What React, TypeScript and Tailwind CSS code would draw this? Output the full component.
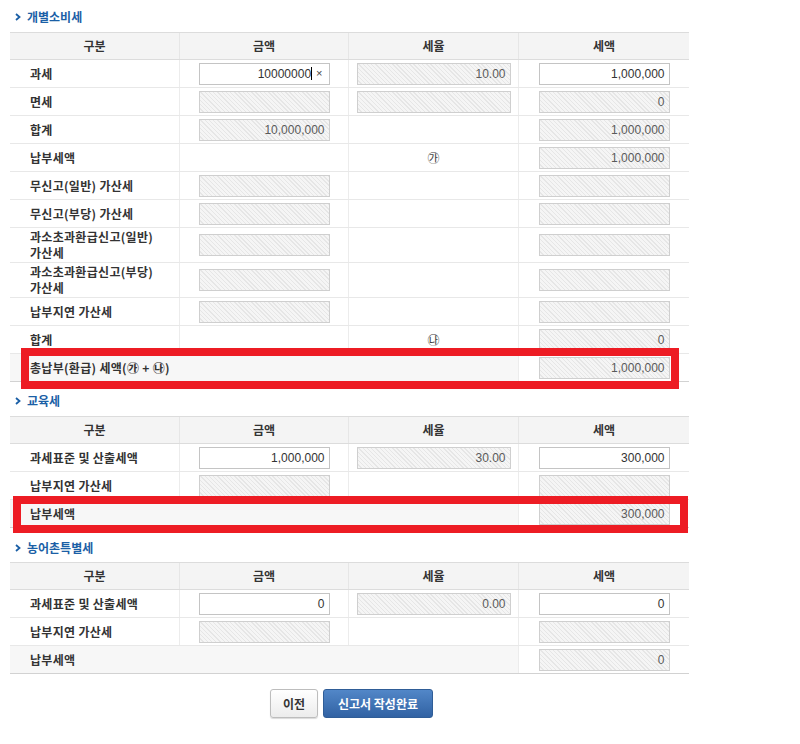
import React from 'react';

type Cell =
  | { kind: 'empty' }
  | { kind: 'mark'; text: string }
  | { kind: 'field'; value?: string; edit?: boolean; caret?: boolean; wide?: boolean };

interface Row {
  label: React.ReactNode;
  tall?: boolean;
  span?: boolean;
  cells: Cell[];
}

const hatch =
  'bg-[#f3f3f3] bg-[image:repeating-linear-gradient(45deg,#f5f5f5_0px,#f5f5f5_2px,#e6e6e6_2px,#e6e6e6_3px)]';

function Field({ value, edit, caret, wide }: { value?: string; edit?: boolean; caret?: boolean; wide?: boolean }) {
  const base =
    'mx-auto h-[22px] flex items-center justify-end pr-[4px] text-[12px] font-["Liberation_Sans",sans-serif]';
  const w = wide ? 'w-[154px]' : 'w-[131px]';
  if (edit) {
    return (
      <div className={`${base} ${w} bg-white border border-[#c4c4c4] text-[#333]`}>
        {value}
        {caret && (
          <>
            <span className="w-px h-[13px] bg-black" />
            <span className="ml-[4px] mr-[2px] text-[11px] text-[#444]">×</span>
          </>
        )}
      </div>
    );
  }
  return <div className={`${base} ${w} ${hatch} border border-[#cfcfcf] text-[#5a5a5a]`}>{value}</div>;
}

function renderCell(c: Cell) {
  if (c.kind === 'empty') return null;
  if (c.kind === 'mark') return <span className="text-[12px] text-[#444]">{c.text}</span>;
  return <Field value={c.value} edit={c.edit} caret={c.caret} wide={c.wide} />;
}

const E: Cell = { kind: 'empty' };
const G = (value?: string, wide?: boolean): Cell => ({ kind: 'field', value, wide });
const W = (value: string, caret?: boolean): Cell => ({ kind: 'field', value, edit: true, caret });

function Chevron() {
  return (
    <svg width="6" height="8" viewBox="0 0 6 8" className="mr-[6px]">
      <path d="M1 1 L4.5 4 L1 7" fill="none" stroke="#1b5fa6" strokeWidth="1.8" />
    </svg>
  );
}

function Title({ text, className }: { text: string; className: string }) {
  return (
    <div className={`flex items-center h-4 pl-[5px] text-[12px] font-bold text-[#1b5fa6] ${className}`}>
      <Chevron />
      {text}
    </div>
  );
}

function Header() {
  const cls = 'flex items-center justify-center text-[12px] font-bold text-[#333]';
  return (
    <div className="grid grid-cols-[170px_169px_170px_170px] h-[28px] bg-[#f4f4f4] border-t border-b border-[#dcdcdc]">
      <div className={`${cls} border-r border-[#e6e6e6]`}>구분</div>
      <div className={`${cls} border-r border-[#e6e6e6]`}>금액</div>
      <div className={`${cls} border-r border-[#e6e6e6]`}>세율</div>
      <div className={cls}>세액</div>
    </div>
  );
}

function TaxTable({ rows, children }: { rows: Row[]; children?: React.ReactNode }) {
  return (
    <div className="relative w-[679px]">
      <Header />
      {rows.map((r, i) => {
        const last = i === rows.length - 1;
        const rowCls = `grid grid-cols-[170px_169px_170px_170px] border-b ${
          last ? 'border-[#d2d2d2]' : 'border-[#e8e8e8]'
        } ${r.tall ? 'h-[35px]' : 'h-[28px]'}`;
        const label = 'flex items-center pl-[20px] text-[12px] font-bold text-[#333] leading-[16px] tracking-[0.3px]';
        if (r.span) {
          return (
            <div key={i} className={rowCls}>
              <div className={`${label} col-span-3 bg-[#f7f7f7] border-r border-[#ececec]`}>{r.label}</div>
              <div className="flex items-center">{renderCell(r.cells[0])}</div>
            </div>
          );
        }
        return (
          <div key={i} className={rowCls}>
            <div className={`${label} border-r border-[#ececec]`}>{r.label}</div>
            <div className="flex items-center justify-center border-r border-[#ececec]">{renderCell(r.cells[0])}</div>
            <div className="flex items-center justify-center border-r border-[#ececec]">{renderCell(r.cells[1])}</div>
            <div className="flex items-center justify-center">{renderCell(r.cells[2])}</div>
          </div>
        );
      })}
      {children}
    </div>
  );
}

const excise: Row[] = [
  { label: '과세', cells: [W('10000000', true), G('10.00', true), W('1,000,000')] },
  { label: '면세', cells: [G(), G(undefined, true), G('0')] },
  { label: '합계', cells: [G('10,000,000'), E, G('1,000,000')] },
  { label: '납부세액', cells: [E, { kind: 'mark', text: '㉮' }, G('1,000,000')] },
  { label: '무신고(일반) 가산세', cells: [G(), E, G()] },
  { label: '무신고(부당) 가산세', cells: [G(), E, G()] },
  {
    label: (
      <span>
        과소초과환급신고(일반)
        <br />
        가산세
      </span>
    ),
    tall: true,
    cells: [G(), E, G()],
  },
  {
    label: (
      <span>
        과소초과환급신고(부당)
        <br />
        가산세
      </span>
    ),
    tall: true,
    cells: [G(), E, G()],
  },
  { label: '납부지연 가산세', cells: [G(), E, G()] },
  { label: '합계', cells: [E, { kind: 'mark', text: '㉯' }, G('0')] },
  { label: '총납부(환급) 세액(㉮ + ㉯)', span: true, cells: [G('1,000,000')] },
];

const education: Row[] = [
  { label: '과세표준 및 산출세액', cells: [W('1,000,000'), G('30.00', true), W('300,000')] },
  { label: '납부지연 가산세', cells: [G(), E, G()] },
  { label: '납부세액', span: true, cells: [G('300,000')] },
];

const rural: Row[] = [
  { label: '과세표준 및 산출세액', cells: [W('0'), G('0.00', true), W('0')] },
  { label: '납부지연 가산세', cells: [G(), E, G()] },
  { label: '납부세액', span: true, cells: [G('0')] },
];

export default function App() {
  return (
    <div className="w-[800px] h-[744px] bg-white pl-[10px] pt-[9px] font-['Noto_Sans_CJK_KR','Noto_Sans',sans-serif]">
      <Title text="개별소비세" className="mb-[7px]" />
      <TaxTable rows={excise}>
        <div className="absolute left-[11px] top-[316px] w-[658px] h-[41px] border-[8px] border-[#ed1c24]" />
      </TaxTable>

      <Title text="교육세" className="mt-[11px] mb-[7px]" />
      <TaxTable rows={education}>
        <div className="absolute left-[3px] top-[80px] w-[675px] h-[37px] border-[8px] border-[#ed1c24]" />
      </TaxTable>

      <Title text="농어촌특별세" className="mt-[12px] mb-[6px]" />
      <TaxTable rows={rural} />

      <div className="w-[679px] flex justify-center gap-[5px] mt-[15px] pl-[4px]">
        <button className="w-[48px] h-[29px] rounded-[3px] border border-[#bdbdbd] bg-gradient-to-b from-white to-[#ececec] shadow-[0_1px_1px_rgba(0,0,0,0.15)] text-[12px] font-bold text-[#333]">
          이전
        </button>
        <button className="w-[110px] h-[29px] rounded-[3px] border border-[#2f5d97] bg-gradient-to-b from-[#5287c8] to-[#3162a3] text-[12px] font-bold text-white">
          신고서 작성완료
        </button>
      </div>
    </div>
  );
}
